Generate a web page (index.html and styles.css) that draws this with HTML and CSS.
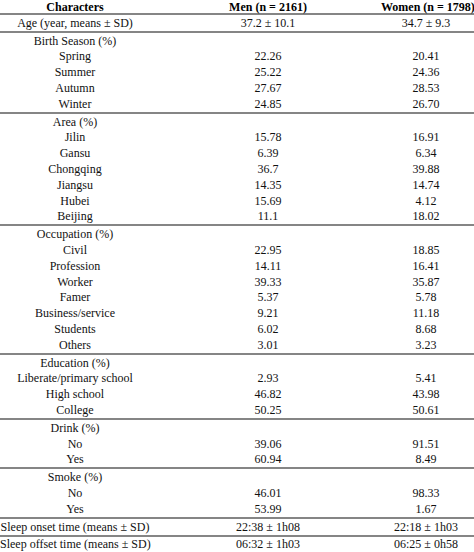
FILE: index.html
```html
<!DOCTYPE html>
<html>
<head>
<meta charset="utf-8">
<link rel="stylesheet" href="styles.css">
</head>
<body>
<div class="tbl">
  <div class="row head"><span>Characters</span><span>Men (n = 2161)</span><span>Women (n = 1798)</span></div>
  <div class="sec">
    <div class="row"><span>Age (year, means ± SD)</span><span>37.2 ± 10.1</span><span>34.7 ± 9.3</span></div>
  </div>
  <div class="sec">
    <div class="row"><span>Birth Season (%)</span><span></span><span></span></div>
    <div class="row"><span>Spring</span><span>22.26</span><span>20.41</span></div>
    <div class="row"><span>Summer</span><span>25.22</span><span>24.36</span></div>
    <div class="row"><span>Autumn</span><span>27.67</span><span>28.53</span></div>
    <div class="row"><span>Winter</span><span>24.85</span><span>26.70</span></div>
  </div>
  <div class="sec">
    <div class="row"><span>Area (%)</span><span></span><span></span></div>
    <div class="row"><span>Jilin</span><span>15.78</span><span>16.91</span></div>
    <div class="row"><span>Gansu</span><span>6.39</span><span>6.34</span></div>
    <div class="row"><span>Chongqing</span><span>36.7</span><span>39.88</span></div>
    <div class="row"><span>Jiangsu</span><span>14.35</span><span>14.74</span></div>
    <div class="row"><span>Hubei</span><span>15.69</span><span>4.12</span></div>
    <div class="row"><span>Beijing</span><span>11.1</span><span>18.02</span></div>
  </div>
  <div class="sec">
    <div class="row"><span>Occupation (%)</span><span></span><span></span></div>
    <div class="row"><span>Civil</span><span>22.95</span><span>18.85</span></div>
    <div class="row"><span>Profession</span><span>14.11</span><span>16.41</span></div>
    <div class="row"><span>Worker</span><span>39.33</span><span>35.87</span></div>
    <div class="row"><span>Famer</span><span>5.37</span><span>5.78</span></div>
    <div class="row"><span>Business/service</span><span>9.21</span><span>11.18</span></div>
    <div class="row"><span>Students</span><span>6.02</span><span>8.68</span></div>
    <div class="row"><span>Others</span><span>3.01</span><span>3.23</span></div>
  </div>
  <div class="sec">
    <div class="row"><span>Education (%)</span><span></span><span></span></div>
    <div class="row"><span>Liberate/primary school</span><span>2.93</span><span>5.41</span></div>
    <div class="row"><span>High school</span><span>46.82</span><span>43.98</span></div>
    <div class="row"><span>College</span><span>50.25</span><span>50.61</span></div>
  </div>
  <div class="sec">
    <div class="row"><span>Drink (%)</span><span></span><span></span></div>
    <div class="row"><span>No</span><span>39.06</span><span>91.51</span></div>
    <div class="row"><span>Yes</span><span>60.94</span><span>8.49</span></div>
  </div>
  <div class="sec">
    <div class="row"><span>Smoke (%)</span><span></span><span></span></div>
    <div class="row"><span>No</span><span>46.01</span><span>98.33</span></div>
    <div class="row"><span>Yes</span><span>53.99</span><span>1.67</span></div>
  </div>
  <div class="sec">
    <div class="row"><span>Sleep onset time (means ± SD)</span><span>22:38 ± 1h08</span><span>22:18 ± 1h03</span></div>
  </div>
  <div class="sec">
    <div class="row"><span>Sleep offset time (means ± SD)</span><span>06:32 ± 1h03</span><span>06:25 ± 0h58</span></div>
  </div>
</div>
</body>
</html>
```
FILE: styles.css
```css
html, body {
  margin: 0;
  padding: 0;
  background: #ffffff;
  overflow: hidden;
}
.tbl {
  width: 474px;
  font-family: "Liberation Serif", "Times New Roman", serif;
  font-size: 12px;
  color: #111111;
}
.row {
  display: grid;
  grid-template-columns: 150px 236px 88px;
  height: 15.8px;
  align-items: center;
  line-height: 1;
}
.row span {
  text-align: center;
  white-space: nowrap;
}
.row span:nth-child(3) {
  padding-right: 8px;
}
.head {
  height: 13px;
  font-weight: bold;
  color: #000000;
}
.head span:nth-child(3) {
  text-align: left;
  padding-left: 0;
  padding-right: 0;
  margin-left: -5px;
}
.sec {
  border-top: 2px solid #858585;
}
```
